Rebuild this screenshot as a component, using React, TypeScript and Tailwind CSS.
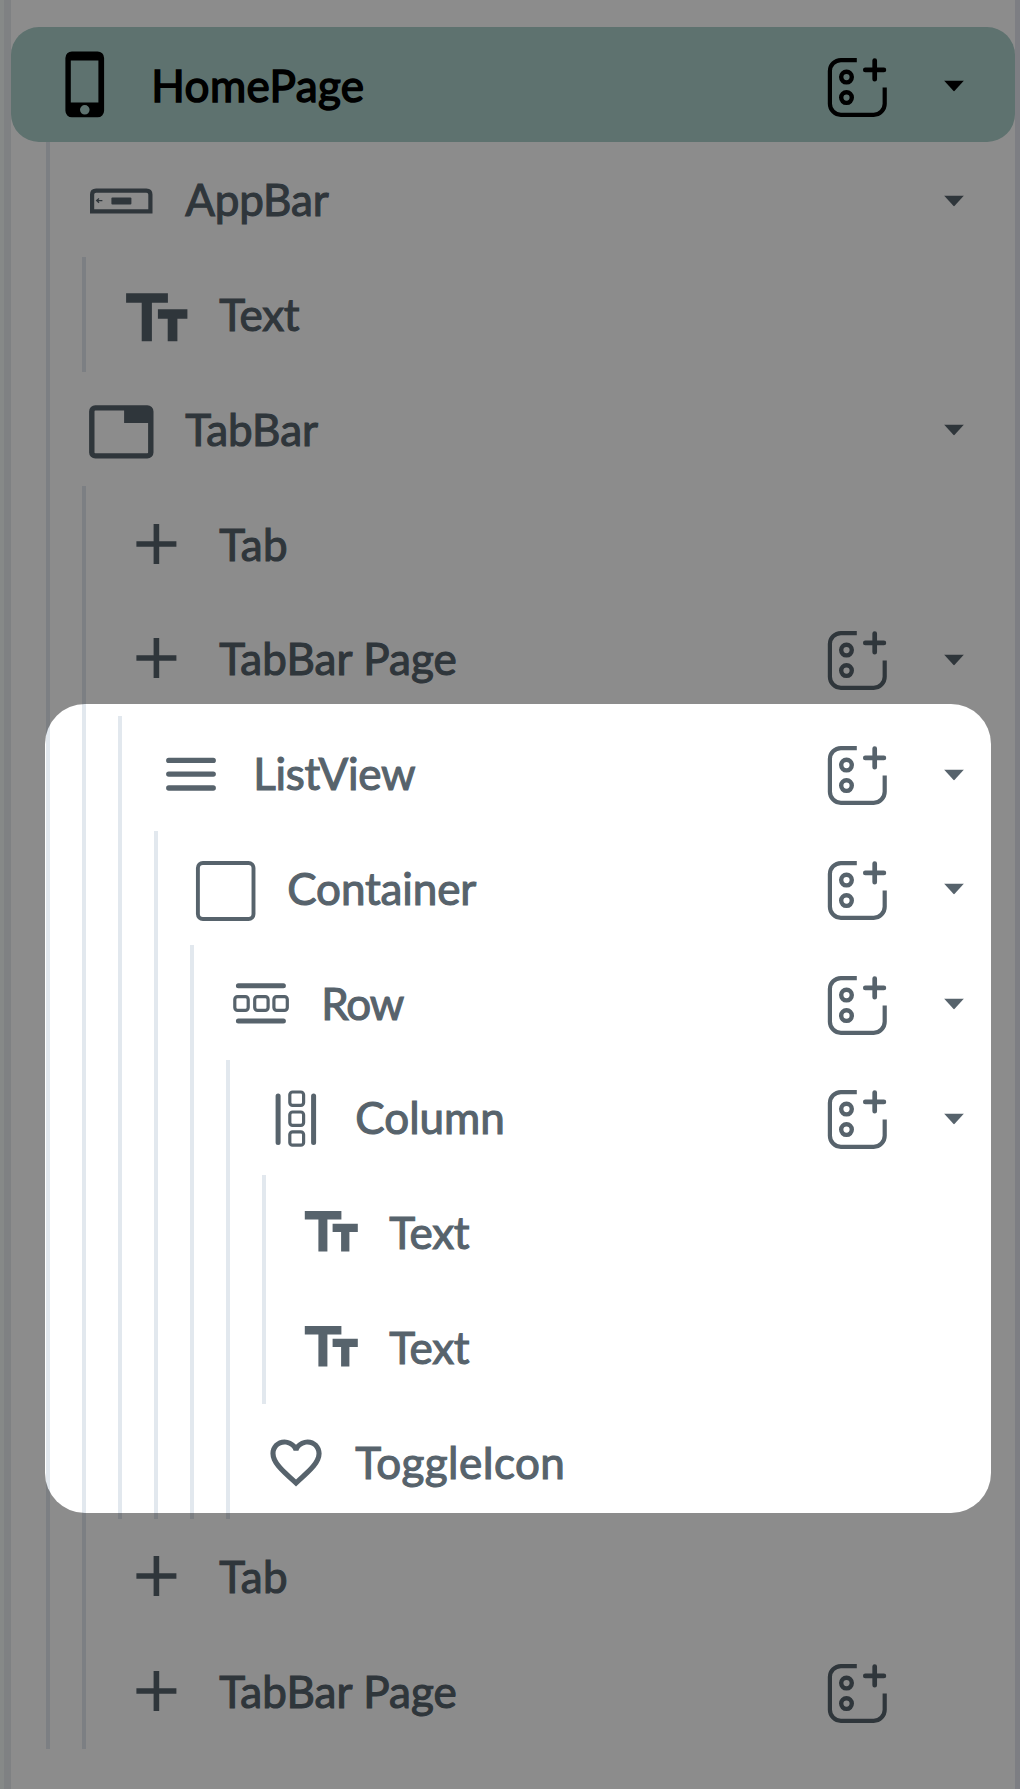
import React from "react";

type IconName = "phone" | "appbar" | "text" | "textSmall" | "tabbar" | "plus" | "list" | "box" | "row" | "column" | "heart";

interface TreeItem {
  label: string;
  depth: number;
  icon: IconName;
  tracking: string;
  add?: boolean;
  caret?: boolean;
}

const items: TreeItem[] = [
  { label: "HomePage", depth: 0, icon: "phone", tracking: "tracking-[0.4px]", add: true, caret: true },
  { label: "AppBar", depth: 1, icon: "appbar", tracking: "tracking-[-0.2px]", caret: true },
  { label: "Text", depth: 2, icon: "text", tracking: "tracking-[-0.3px]" },
  { label: "TabBar", depth: 1, icon: "tabbar", tracking: "tracking-[0px]", caret: true },
  { label: "Tab", depth: 2, icon: "plus", tracking: "tracking-[0.4px]" },
  { label: "TabBar Page", depth: 2, icon: "plus", tracking: "tracking-[0.1px]", add: true, caret: true },
  { label: "ListView", depth: 3, icon: "list", tracking: "tracking-[-0.35px]", add: true, caret: true },
  { label: "Container", depth: 4, icon: "box", tracking: "tracking-[-0.15px]", add: true, caret: true },
  { label: "Row", depth: 5, icon: "row", tracking: "tracking-[-1.2px]", add: true, caret: true },
  { label: "Column", depth: 6, icon: "column", tracking: "tracking-[0px]", add: true, caret: true },
  { label: "Text", depth: 7, icon: "textSmall", tracking: "tracking-[-0.3px]" },
  { label: "Text", depth: 7, icon: "textSmall", tracking: "tracking-[-0.3px]" },
  { label: "ToggleIcon", depth: 6, icon: "heart", tracking: "tracking-[0.42px]" },
  { label: "Tab", depth: 2, icon: "plus", tracking: "tracking-[0.4px]" },
  { label: "TabBar Page", depth: 2, icon: "plus", tracking: "tracking-[0.1px]", add: true },
];

const glyphs: Record<IconName, React.ReactNode> = {
  phone: (
    <path
      fill="currentColor"
      fillRule="evenodd"
      d="M17.5 -1.6H43.2A6.5 6.5 0 0 1 49.7 4.9V57.8A6.5 6.5 0 0 1 43.2 64.3H17.5A6.5 6.5 0 0 1 11 57.8V4.9A6.5 6.5 0 0 1 17.5 -1.6ZM16.4 7.5V49.6H44V7.5ZM30.4 52A4.8 4.8 0 1 0 30.4 61.6A4.8 4.8 0 1 0 30.4 52Z"
    />
  ),
  appbar: (
    <>
      <path d="M2.7 44.3V27.6Q2.7 23.6 6.7 23.6H57Q61 23.6 61 27.6V44.3Z" fill="none" stroke="currentColor" strokeWidth="4.2" />
      <rect x="22" y="30.6" width="20" height="6.8" rx="1" fill="currentColor" />
      <path d="M13 33.6H7.5M9.6 31.4L7.3 33.6L9.6 35.8" fill="none" stroke="currentColor" strokeWidth="1.4" />
    </>
  ),
  text: <path fill="currentColor" d="M1.7 11.2H43.5V20.8H27.5V59.2H17.3V20.8H1.7ZM33.5 27.2H63V36.8H53V59.2H43.3V36.8H33.5Z" />,
  textSmall: <path fill="currentColor" d="M5.4 11H42V19.5H28V51.4H19V19.5H5.4ZM33.2 23.8H58.4V32H50V51.4H41.7V32H33.2Z" />,
  tabbar: (
    <>
      <rect x="2.4" y="10.9" width="59" height="48" rx="3.5" fill="none" stroke="currentColor" strokeWidth="5.4" />
      <path d="M34.7 10H61V26H34.7Z" fill="currentColor" />
    </>
  ),
  plus: <path d="M12 32H52M32 12V52" stroke="currentColor" strokeWidth="5.6" />,
  list: <path d="M9.4 19.4H53.8M9.4 33.1H53.8M9.4 47H53.8" stroke="currentColor" strokeWidth="5.4" strokeLinecap="round" />,
  box: <rect x="3.5" y="7" width="55.6" height="56" rx="5" fill="none" stroke="currentColor" strokeWidth="3.9" />,
  row: (
    <g fill="none" stroke="currentColor">
      <path d="M9 14.7H54M9 50H54" strokeWidth="5" strokeLinecap="round" />
      <g strokeWidth="3.2">
        <rect x="5.4" y="25.6" width="13.4" height="13.8" rx="2.8" />
        <rect x="25.3" y="25.6" width="13.4" height="13.8" rx="2.8" />
        <rect x="44.5" y="25.6" width="13.4" height="13.8" rx="2.8" />
      </g>
    </g>
  ),
  column: (
    <g fill="none" stroke="currentColor">
      <path d="M13.7 11V57.6M49.2 11V57.6" strokeWidth="5" strokeLinecap="round" />
      <g strokeWidth="3.2">
        <rect x="25.4" y="7" width="13.8" height="13.4" rx="2.8" />
        <rect x="25.4" y="27" width="13.8" height="13.4" rx="2.8" />
        <rect x="25.4" y="46.8" width="13.8" height="13.4" rx="2.8" />
      </g>
    </g>
  ),
  heart: (
    <path
      transform="translate(.9 1.8) scale(2.56)"
      fill="currentColor"
      d="M16.5 3c-1.74 0-3.41.81-4.5 2.09C10.91 3.81 9.24 3 7.5 3 4.42 3 2 5.42 2 8.5c0 3.78 3.4 6.86 8.55 11.54L12 21.35l1.45-1.32C18.6 15.36 22 12.28 22 8.5 22 5.42 19.58 3 16.5 3zm-4.4 15.55l-.1.1-.1-.1C7.14 14.24 4 11.39 4 8.5 4 6.5 5.5 5 7.5 5c1.54 0 3.04.99 3.57 2.36h1.87C13.46 5.99 14.96 5 16.5 5c2 0 3.5 1.5 3.5 3.5 0 2.89-3.14 5.74-7.9 10.05z"
    />
  ),
};

function AddChild() {
  return (
    <svg viewBox="0 0 64 64" className="size-16 shrink-0 translate-y-[2.4px]" fill="none" stroke="currentColor" strokeWidth="4.2">
      <path d="M31.8 4.7H15.9A11 11 0 0 0 4.9 15.7V48.4A11 11 0 0 0 15.9 59.4H48.7A11 11 0 0 0 59.7 48.4V32" />
      <circle cx="21.5" cy="21.7" r="5.3" strokeWidth="4.4" />
      <circle cx="21.5" cy="42.2" r="5.3" strokeWidth="4.4" />
      <path d="M40.3 14.5H58.9M49.7 5.2V23.8" strokeWidth="4.7" strokeLinecap="round" />
    </svg>
  );
}

function Row({ item }: { item: TreeItem }) {
  const root = item.depth === 0;
  return (
    <div className={root ? "relative flex h-[114.75px] items-center rounded-[28px] bg-[#abcfca] text-black" : "relative flex h-[114.75px] items-center text-[#57636c]"}>
      <div className="absolute inset-y-0 left-[35px] flex gap-8">
        {Array.from({ length: item.depth }, (_, i) => (
          <span key={i} className="h-full w-1 bg-[#e2e8ee]" />
        ))}
      </div>
      <svg viewBox="-0.4 0 64 64" className="size-16 shrink-0 overflow-visible" style={{ marginLeft: 43 + item.depth * 35 }}>
        {glyphs[item.icon]}
      </svg>
      <span
        className={`${item.tracking} ${root ? "[-webkit-text-stroke:1.5px]" : "[-webkit-text-stroke:1.1px]"} whitespace-nowrap text-[44px] leading-[54px]`}
        style={{ marginLeft: 33.3 - item.depth }}
      >
        {item.label}
      </span>
      <div className="ml-auto flex items-center">
        {item.add && <AddChild />}
        <div className="ml-[55.5px] mr-[51px] flex h-11 w-5 items-center">
          {item.caret && (
            <svg viewBox="0 0 20 11" className="h-[11px] w-5 translate-y-[1.6px]">
              <path d="M0 0H20L10 10.8Z" fill="currentColor" />
            </svg>
          )}
        </div>
      </div>
    </div>
  );
}

export default function App() {
  return (
    <div className="relative flex h-[1789px] w-[1020px] overflow-hidden bg-white font-['Lato',sans-serif]">
      <div className="w-[4.3px] shrink-0 bg-[#f4faf7]" />
      <div className="w-[6.7px] shrink-0 bg-[#e8ebee]" />
      <main className="min-w-0 flex-1 pt-[27.3px]">
        {items.map((item, i) => (
          <Row key={i} item={item} />
        ))}
      </main>
      <div className="w-[5px] shrink-0 bg-[#e3e5ee]" />
      <div className="pointer-events-none absolute left-[45px] top-[704px] h-[809.3px] w-[946.4px] rounded-[40px] shadow-[0_0_0_1800px_rgba(0,0,0,0.45)]" />
    </div>
  );
}
